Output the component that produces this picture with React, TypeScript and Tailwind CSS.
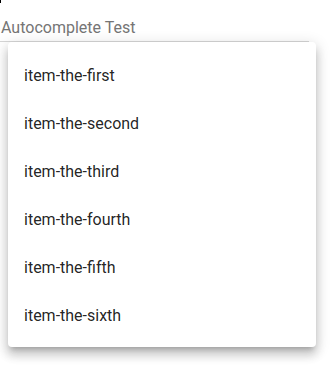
const items = [
  'item-the-first',
  'item-the-second',
  'item-the-third',
  'item-the-fourth',
  'item-the-fifth',
  'item-the-sixth',
];

export default function App() {
  return (
    <div className="relative h-[369px] w-[334px] bg-white" style={{ fontFamily: 'Roboto, "Liberation Sans", sans-serif' }}>
      <div className="absolute left-0 top-0 h-[3px] w-[1px] bg-black" />
      <div className="w-[309px] pt-4">
        <div className="h-[25px] pl-[1px] text-base leading-6 text-[#757575]">Autocomplete Test</div>
        <div className="h-px bg-[#d6d6d6]" />
      </div>
      <ul className="absolute left-2 top-[42px] w-[308px] rounded bg-white pt-[10px] pb-[7px] shadow-[0_5px_5px_-3px_rgba(0,0,0,0.2),0_8px_10px_1px_rgba(0,0,0,0.14),0_3px_14px_2px_rgba(0,0,0,0.12)]">
        {items.map((item) => (
          <li key={item} className="flex h-12 items-center px-4 text-base leading-6 text-[rgba(0,0,0,0.87)]">
            {item}
          </li>
        ))}
      </ul>
    </div>
  );
}
